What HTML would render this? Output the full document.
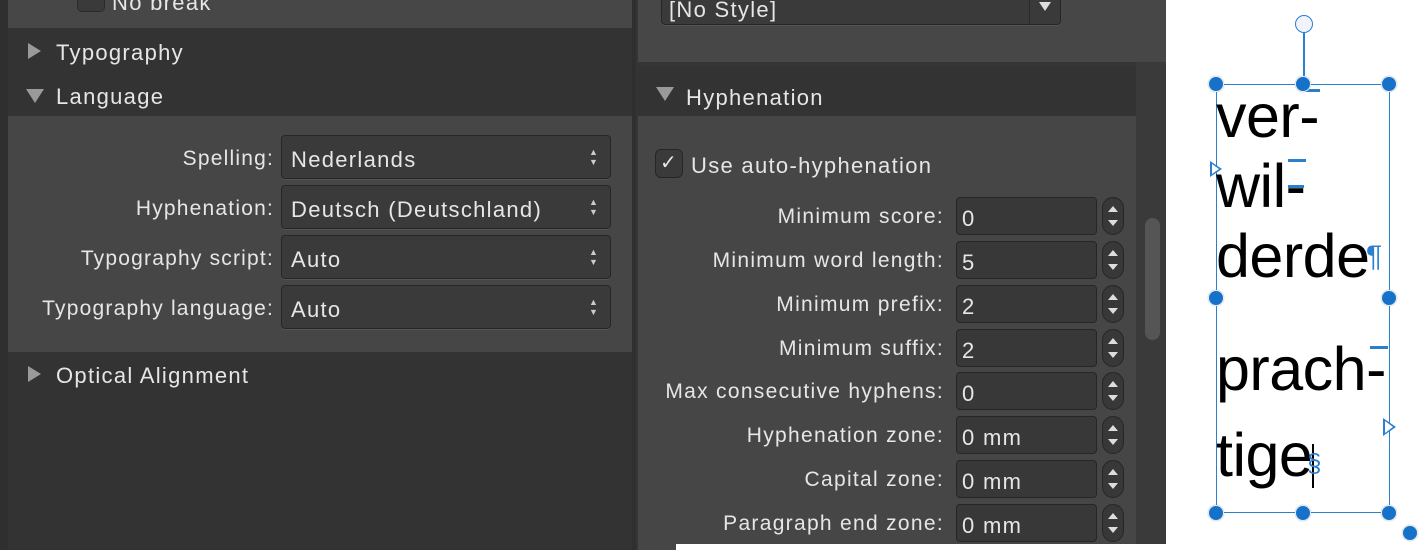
<!DOCTYPE html><html><head><style>
*{margin:0;padding:0;box-sizing:border-box}
body{width:1426px;height:550px;overflow:hidden;background:#fff;position:relative;font-family:"Liberation Sans",sans-serif;color:#e6e6e6}
.a{position:absolute}
.t{position:absolute;font-size:21px;white-space:nowrap;letter-spacing:1.2px}
.v{font-size:22px;letter-spacing:1.3px}
.hd{font-size:22px;letter-spacing:1.3px}
.m{font-size:21px;letter-spacing:1.3px}
.r{text-align:right}
.sel{position:absolute;background:#3a3a3a;border:1px solid #262626;border-radius:4px;box-shadow:0 1px 0 #555}
.inp{position:absolute;left:956px;width:141px;height:38px;background:#383838;border:1px solid #262626;border-radius:4px}
.st{position:absolute;left:1102px;width:22px;height:38px;background:#383838;border:1px solid #262626;border-radius:11px}
.st:before{content:"";position:absolute;left:5px;top:8px;border:5px solid transparent;border-top:0;border-bottom:6px solid #ddd}
.st:after{content:"";position:absolute;left:5px;top:22px;border:5px solid transparent;border-bottom:0;border-top:6px solid #ddd}
.ud{position:absolute;left:589px;font-size:9px;color:#ccc;line-height:10px}
.dot{position:absolute;width:16px;height:16px;border-radius:50%;background:#1671c9;border:1.5px solid #e6eef7;box-shadow:0 0 1px #999}
.big{position:absolute;left:1216px;font-size:61px;color:#000;font-family:"Liberation Sans",sans-serif;line-height:1;letter-spacing:-0.5px}
</style></head><body>
<div class="a" style="left:0;top:0;width:636px;height:550px;background:#2f2f2f"></div>
<div class="a" style="left:8px;top:0;width:624px;height:28px;background:#474747"></div>
<div class="a" style="left:77px;top:-8px;width:28px;height:20px;border-radius:5px;background:#3a3a3a;border:1px solid #2a2a2a"></div>
<div class="t hd" style="left:112px;top:-10px">No break</div>
<div class="a" style="left:8px;top:28px;width:624px;height:88px;background:#333"></div>
<div class="a" style="left:28px;top:43px;border:8px solid transparent;border-left:13px solid #9a9a9a;border-right:0"></div>
<div class="t hd" style="left:56px;top:40px">Typography</div>
<div class="a" style="left:26px;top:89px;border:9px solid transparent;border-top:14px solid #9a9a9a;border-bottom:0"></div>
<div class="t hd" style="left:56px;top:84px">Language</div>
<div class="a" style="left:8px;top:116px;width:624px;height:236px;background:#464646"></div>
<div class="t r" style="left:0;width:274px;top:147px">Spelling:</div>
<div class="t r" style="left:0;width:274px;top:197px">Hyphenation:</div>
<div class="t r" style="left:0;width:274px;top:247px">Typography script:</div>
<div class="t r" style="left:0;width:274px;top:297px">Typography language:</div>
<div class="sel" style="left:281px;top:135px;width:330px;height:44px"></div>
<div class="sel" style="left:281px;top:185px;width:330px;height:44px"></div>
<div class="sel" style="left:281px;top:235px;width:330px;height:44px"></div>
<div class="sel" style="left:281px;top:285px;width:330px;height:44px"></div>
<div class="t v" style="left:291px;top:147px">Nederlands</div>
<div class="t v" style="left:291px;top:197px">Deutsch (Deutschland)</div>
<div class="t v" style="left:291px;top:247px">Auto</div>
<div class="t v" style="left:291px;top:297px">Auto</div>
<div class="ud" style="top:147px">▲<br>▼</div>
<div class="ud" style="top:197px">▲<br>▼</div>
<div class="ud" style="top:247px">▲<br>▼</div>
<div class="ud" style="top:297px">▲<br>▼</div>
<div class="a" style="left:8px;top:352px;width:624px;height:198px;background:#333"></div>
<div class="a" style="left:28px;top:366px;border:8px solid transparent;border-left:13px solid #9a9a9a;border-right:0"></div>
<div class="t hd" style="left:56px;top:363px">Optical Alignment</div>
<div class="a" style="left:636px;top:0;width:530px;height:550px;background:#353535"></div>
<div class="a" style="left:638px;top:0;width:528px;height:62px;background:#474747"></div>
<div class="sel" style="left:661px;top:-14px;width:400px;height:39px"></div>
<div class="a" style="left:1029px;top:-14px;width:1px;height:38px;background:#2a2a2a"></div>
<div class="t v" style="left:669px;top:-3px">[No Style]</div>
<div class="a" style="left:1039px;top:2px;border:6px solid transparent;border-top:9px solid #ddd;border-bottom:0"></div>
<div class="a" style="left:638px;top:66px;width:498px;height:50px;background:#333"></div>
<div class="a" style="left:656px;top:87px;border:9px solid transparent;border-top:14px solid #9a9a9a;border-bottom:0"></div>
<div class="t hd" style="left:686px;top:85px">Hyphenation</div>
<div class="a" style="left:638px;top:116px;width:498px;height:434px;background:#464646"></div>
<div class="a" style="left:1136px;top:62px;width:30px;height:488px;background:#3a3a3a"></div>
<div class="a" style="left:1145px;top:218px;width:15px;height:122px;border-radius:8px;background:#555"></div>
<div class="a" style="left:655px;top:149px;width:28px;height:29px;border-radius:6px;background:#3a3a3a;border:1px solid #262626"></div>
<div class="t" style="left:660px;top:150px;font-size:20px">✓</div>
<div class="t hd" style="left:691px;top:153px">Use auto-hyphenation</div>
<div class="t r m" style="left:600px;width:344px;top:205px">Minimum score:</div>
<div class="t r m" style="left:600px;width:344px;top:249px">Minimum word length:</div>
<div class="t r m" style="left:600px;width:344px;top:293px">Minimum prefix:</div>
<div class="t r m" style="left:600px;width:344px;top:337px">Minimum suffix:</div>
<div class="t r m" style="left:600px;width:344px;top:380px">Max consecutive hyphens:</div>
<div class="t r m" style="left:600px;width:344px;top:424px">Hyphenation zone:</div>
<div class="t r m" style="left:600px;width:344px;top:468px">Capital zone:</div>
<div class="t r m" style="left:600px;width:344px;top:512px">Paragraph end zone:</div>
<div class="inp" style="top:197px"></div><div class="st" style="top:197px"></div>
<div class="inp" style="top:241px"></div><div class="st" style="top:241px"></div>
<div class="inp" style="top:285px"></div><div class="st" style="top:285px"></div>
<div class="inp" style="top:329px"></div><div class="st" style="top:329px"></div>
<div class="inp" style="top:372px"></div><div class="st" style="top:372px"></div>
<div class="inp" style="top:416px"></div><div class="st" style="top:416px"></div>
<div class="inp" style="top:460px"></div><div class="st" style="top:460px"></div>
<div class="inp" style="top:504px"></div><div class="st" style="top:504px"></div>
<div class="t v" style="left:962px;top:206px">0</div>
<div class="t v" style="left:962px;top:250px">5</div>
<div class="t v" style="left:962px;top:294px">2</div>
<div class="t v" style="left:962px;top:338px">2</div>
<div class="t v" style="left:962px;top:381px">0</div>
<div class="t v" style="left:962px;top:425px">0 mm</div>
<div class="t v" style="left:962px;top:469px">0 mm</div>
<div class="t v" style="left:962px;top:513px">0 mm</div>
<div class="a" style="left:676px;top:544px;width:490px;height:6px;background:#fff"></div>
<div class="a" style="left:1166px;top:0;width:260px;height:550px;background:#fff"></div>
<div class="a" style="left:1303px;top:24px;width:1.5px;height:60px;background:#2b7fcf"></div>
<div class="a" style="left:1295px;top:15px;width:18px;height:18px;border-radius:50%;border:1.5px solid #2b7fcf;background:#eef4fa"></div>
<div class="a" style="left:1216px;top:84px;width:174px;height:429px;border:1.5px solid #2b7fcf"></div>
<div class="big" style="top:86px">ver-</div>
<div class="big" style="top:156px">wil-</div>
<div class="big" style="top:226px">derde</div>
<div class="big" style="top:339px">prach-</div>
<div class="big" style="top:425px">tige</div>
<div class="a" style="left:1312px;top:444px;width:2px;height:44px;background:#000"></div>
<div class="a" style="left:1302px;top:89px;width:18px;height:3px;background:#2b7fcf"></div>
<div class="a" style="left:1288px;top:159px;width:18px;height:3px;background:#2b7fcf"></div>
<div class="a" style="left:1288px;top:185px;width:16px;height:3px;background:#2b7fcf"></div>
<div class="a" style="left:1370px;top:346px;width:18px;height:3px;background:#2b7fcf"></div>
<div class="t" style="left:1366px;top:240px;color:#2b7fcf;font-size:30px;letter-spacing:0">¶</div>
<div class="t" style="left:1307px;top:448px;color:#2b7fcf;font-size:26px;letter-spacing:0">§</div>
<div class="a" style="left:1210px;top:161px;border:8px solid transparent;border-left:12px solid #2b7fcf;border-right:0"></div>
<div class="a" style="left:1212px;top:164px;border:5px solid transparent;border-left:7px solid #fff;border-right:0"></div>
<div class="a" style="left:1383px;top:418px;border:9px solid transparent;border-left:13px solid #2b7fcf;border-right:0"></div>
<div class="a" style="left:1385px;top:421px;border:6px solid transparent;border-left:8px solid #fff;border-right:0"></div>
<div class="dot" style="left:1208px;top:76px"></div>
<div class="dot" style="left:1295px;top:76px"></div>
<div class="dot" style="left:1381px;top:76px"></div>
<div class="dot" style="left:1208px;top:290px"></div>
<div class="dot" style="left:1381px;top:290px"></div>
<div class="dot" style="left:1208px;top:505px"></div>
<div class="dot" style="left:1295px;top:505px"></div>
<div class="dot" style="left:1381px;top:505px"></div>
<div class="dot" style="left:1402px;top:525px"></div>
</body></html>
